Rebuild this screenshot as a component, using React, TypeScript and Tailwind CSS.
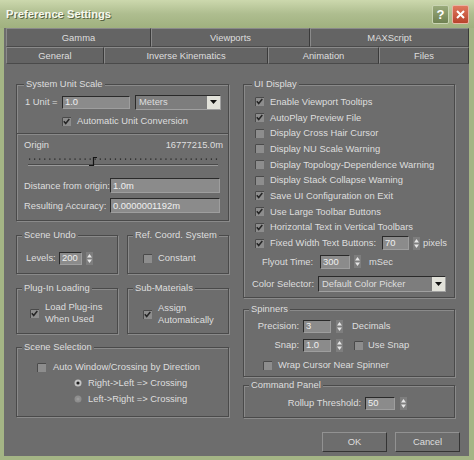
import React from "react";

const BG = "bg-[#6d6d6d]";

function Check({ on }: { on?: boolean }) {
  return (
    <svg width="9" height="9" viewBox="0 0 9 9" className="block shrink-0">
      <rect x="0" y="0" width="9" height="9" fill="#8d8d8d" />
      <path d="M0.5 9V0.5H9" stroke="#4a4a4a" fill="none" />
      {on && <path d="M1.8 4.2 L3.7 6.4 L7.3 2.1" stroke="#262626" strokeWidth="1.6" fill="none" />}
    </svg>
  );
}

function Radio({ on }: { on?: boolean }) {
  return (
    <svg width="8" height="8" viewBox="0 0 8 8" className="block shrink-0">
      <circle cx="4" cy="4" r="3.5" fill={on ? "#c4c4c4" : "#8e8e8e"} />
      <circle cx="4" cy="4" r="1.6" fill={on ? "#1e1e1e" : "#9c9c9c"} />
    </svg>
  );
}

function Spin({ cls = "" }: { cls?: string }) {
  return (
    <svg width="7" height="13" viewBox="0 0 7 13" className={`block shrink-0 ${cls}`}>
      <rect width="7" height="13" fill="#7e7e7e" />
      <polygon points="1,5.5 3.5,2 6,5.5" fill="#e6e6e6" />
      <polygon points="1,7.5 3.5,11 6,7.5" fill="#e6e6e6" />
    </svg>
  );
}

function Field({ cls, v }: { cls: string; v: string }) {
  return (
    <div
      className={`shrink-0 flex items-center overflow-hidden whitespace-nowrap bg-[#8b8b8b] border border-t-[#2a2a2a] border-l-[#2a2a2a] border-r-[#9e9e9e] border-b-[#9e9e9e] pl-[2px] text-[#f0f0f0] ${cls}`}
    >
      {v}
    </div>
  );
}

function Drop({ cls, v }: { cls: string; v: string }) {
  return (
    <div
      className={`shrink-0 flex items-stretch bg-[#7d7d7d] border border-t-[#2a2a2a] border-l-[#2a2a2a] border-r-[#a0a0a0] border-b-[#a0a0a0] ${cls}`}
    >
      <span className="flex-1 flex items-center pl-[3px] whitespace-nowrap">{v}</span>
      <span className="w-[13px] bg-[#e2e2da] flex items-center justify-center">
        <svg width="7" height="4" viewBox="0 0 7 4" className="block">
          <polygon points="0,0 7,0 3.5,4" fill="#111" />
        </svg>
      </span>
    </div>
  );
}

function Group({
  title,
  cls,
  tl = "ml-[5px]",
  children,
}: {
  title: string;
  cls: string;
  tl?: string;
  children?: React.ReactNode;
}) {
  return (
    <div className={`border border-[#4a4a4a] shadow-[inset_1px_1px_0_#8a8a8a,1px_1px_0_#8a8a8a] ${cls}`}>
      <div className={`-mt-[7px] w-fit px-[2px] h-[12px] leading-[12px] whitespace-nowrap ${BG} ${tl}`}>{title}</div>
      {children}
    </div>
  );
}

function Tab({ cls, label }: { cls: string; label: string }) {
  return (
    <div
      className={`flex items-center justify-center bg-[#646464] border-t border-l border-r border-b border-t-[#8a8a8a] border-l-[#8a8a8a] border-r-[#3a3a3a] border-b-[#4a4a4a] ${cls}`}
    >
      {label}
    </div>
  );
}

function Btn({ label }: { label: string }) {
  return (
    <div className="w-[65px] h-[20px] flex items-center justify-center border border-t-[#929292] border-l-[#929292] border-r-[#343434] border-b-[#343434] bg-[#6d6d6d]">
      {label}
    </div>
  );
}

function Slider() {
  const dots = [];
  for (let i = 0; i < 38; i++) {
    dots.push(<rect key={i} x={1 + i * 5.05} y={6.5} width="1.2" height="1.2" fill="#1c1c1c" />);
  }
  return (
    <svg width="190" height="14" viewBox="0 0 190 14" className="block mt-[1px] ml-[11px]">
      {dots}
      <line x1="0" y1="12.5" x2="190" y2="12.5" stroke="#4a4a4a" />
      <line x1="0" y1="13.5" x2="190" y2="13.5" stroke="#9a9a9a" />
      <path d="M61 13.5 H65.5 V5.5 H69" stroke="#141414" strokeWidth="1.2" fill="none" />
    </svg>
  );
}

const uiRows: [string, boolean][] = [
  ["Enable Viewport Tooltips", true],
  ["AutoPlay Preview File", true],
  ["Display Cross Hair Cursor", false],
  ["Display NU Scale Warning", false],
  ["Display Topology-Dependence Warning", false],
  ["Display Stack Collapse Warning", false],
  ["Save UI Configuration on Exit", true],
  ["Use Large Toolbar Buttons", true],
  ["Horizontal Text in Vertical Toolbars", true],
];

export default function App() {
  return (
    <div className="w-[474px] h-[460px] flex flex-col bg-[#a4b585] font-['Liberation_Sans',Arial,sans-serif] text-[9.4px] leading-[12px] text-[#dedede] overflow-hidden">
      {/* Title bar */}
      <div className="h-[28px] shrink-0 flex items-start bg-linear-to-b from-[#ccd8ad] via-[#aebd8f] to-[#a0b17f]">
        <div className="pl-[6px] pt-[7px] text-[11.2px] leading-[14px] font-bold text-[#f6f8ee] [text-shadow:1px_1px_0_#5a6644]">
          Preference Settings
        </div>
        <div className="ml-auto mt-[5px] mr-[5px] flex gap-[3px]">
          <div className="w-[17px] h-[19px] rounded-[2px] border border-[#c9d4b2] bg-linear-to-b from-[#9aab7b] to-[#6f8152] flex items-center justify-center text-white font-bold text-[13px] leading-[13px]">
            ?
          </div>
          <div className="w-[17px] h-[19px] rounded-[2px] border border-[#e8b4a4] bg-linear-to-b from-[#e0785e] to-[#b8422c] flex items-center justify-center">
            <svg width="9" height="9" viewBox="0 0 9 9" className="block">
              <path d="M1 1 L8 8 M8 1 L1 8" stroke="#fff" strokeWidth="2" />
            </svg>
          </div>
        </div>
      </div>

      {/* Body */}
      <div className="flex-1 pl-[4px] pr-[5px] pb-[4px]">
        <div className={`h-full ${BG}`}>
          {/* Tabs */}
          <div className="ml-[2px] flex h-[19px]">
            <Tab cls="w-[145px]" label="Gamma" />
            <Tab cls="w-[159px]" label="Viewports" />
            <Tab cls="w-[159px]" label="MAXScript" />
          </div>
          <div className="ml-[2px] flex h-[17px]">
            <Tab cls="w-[98px]" label="General" />
            <Tab cls="w-[164px]" label="Inverse Kinematics" />
            <Tab cls="w-[111px]" label="Animation" />
            <Tab cls="w-[90px]" label="Files" />
          </div>

          {/* Content */}
          <div className="pl-[12px] pt-[20px] flex gap-[14px]">
            {/* Left column */}
            <div className="w-[213px] flex flex-col">
              <Group cls="h-[137px]" title="System Unit Scale" tl="ml-[7px]">
                <div className="mt-[4px] h-[16px] flex items-center">
                  <span className="ml-[8px] w-[37px] whitespace-nowrap">1 Unit =</span>
                  <Field cls="w-[68px] h-[13px]" v="1.0" />
                  <Drop cls="ml-[5px] w-[86px] h-[15px]" v="Meters" />
                </div>
                <div className="mt-[5px] h-[12px] flex items-center pl-[45px] gap-[6px]">
                  <Check on />
                  <span>Automatic Unit Conversion</span>
                </div>
                <div className="mt-[6px] h-[2px] border-t border-t-[#4a4a4a] border-b border-b-[#8a8a8a]" />
                <div className="mt-[4px] h-[12px] flex justify-between pl-[7px] pr-[5px]">
                  <span>Origin</span>
                  <span>16777215.0m</span>
                </div>
                <Slider />
                <div className="mt-[12px] h-[15px] flex items-center pl-[7px]">
                  <span className="w-[86px] whitespace-nowrap">Distance from origin:</span>
                  <Field cls="w-[110px] h-[15px]" v="1.0m" />
                </div>
                <div className="mt-[5px] h-[15px] flex items-center pl-[7px]">
                  <span className="w-[86px] whitespace-nowrap">Resulting Accuracy:</span>
                  <Field cls="w-[110px] h-[15px]" v="0.0000001192m" />
                </div>
              </Group>

              <div className="mt-[14px] flex gap-[9px]">
                <Group cls="w-[102px] h-[39px]" title="Scene Undo">
                  <div className="mt-[10px] h-[14px] flex items-center pl-[9px]">
                    <span className="w-[33px]">Levels:</span>
                    <Field cls="w-[23px] h-[13px]" v="200" />
                    <Spin cls="ml-[4px]" />
                  </div>
                </Group>
                <Group cls="w-[102px] h-[39px]" title="Ref. Coord. System">
                  <div className="mt-[10px] h-[14px] flex items-center pl-[15px] gap-[6px]">
                    <Check />
                    <span>Constant</span>
                  </div>
                </Group>
              </div>

              <div className="mt-[14px] flex gap-[9px]">
                <Group cls="w-[102px] h-[46px]" title="Plug-In Loading">
                  <div className="mt-[7px] h-[24px] flex items-center pl-[13px] gap-[6px]">
                    <Check on />
                    <span>
                      Load Plug-ins
                      <br />
                      When Used
                    </span>
                  </div>
                </Group>
                <Group cls="w-[102px] h-[46px]" title="Sub-Materials">
                  <div className="mt-[8px] h-[24px] flex items-center pl-[15px] gap-[6px]">
                    <Check on />
                    <span>
                      Assign
                      <br />
                      Automatically
                    </span>
                  </div>
                </Group>
              </div>

              <Group cls="mt-[13px] h-[70px]" title="Scene Selection">
                <div className="mt-[8px] h-[12px] flex items-center pl-[20px] gap-[7px]">
                  <Check />
                  <span>Auto Window/Crossing by Direction</span>
                </div>
                <div className="mt-[4px] h-[12px] flex items-center pl-[57px] gap-[6px]">
                  <Radio on />
                  <span>{"Right->Left => Crossing"}</span>
                </div>
                <div className="mt-[4px] h-[12px] flex items-center pl-[57px] gap-[6px]">
                  <Radio />
                  <span>{"Left->Right => Crossing"}</span>
                </div>
              </Group>
            </div>

            {/* Right column */}
            <div className="w-[212px] flex flex-col">
              <Group cls="h-[214px]" title="UI Display" tl="ml-[8px]">
                <div className="mt-[4px] flex flex-col">
                  {uiRows.map(([t, on]) => (
                    <div key={t} className="h-[15.7px] flex items-center pl-[11px] gap-[6px] whitespace-nowrap">
                      <Check on={on} />
                      <span>{t}</span>
                    </div>
                  ))}
                  <div className="h-[15.7px] flex items-center pl-[11px] whitespace-nowrap">
                    <Check on />
                    <span className="ml-[6px] w-[112px]">Fixed Width Text Buttons:</span>
                    <Field cls="w-[27px] h-[14px]" v="70" />
                    <Spin cls="ml-[4px]" />
                    <span className="ml-[3px]">pixels</span>
                  </div>
                </div>
                <div className="mt-[4px] h-[14px] flex items-center pl-[18px]">
                  <span className="w-[58px] whitespace-nowrap">Flyout Time:</span>
                  <Field cls="w-[30px] h-[14px]" v="300" />
                  <Spin cls="ml-[4px]" />
                  <span className="ml-[8px]">mSec</span>
                </div>
                <div className="mt-[7px] h-[16px] flex items-center pl-[8px]">
                  <span className="w-[66px] whitespace-nowrap">Color Selector:</span>
                  <Drop cls="w-[128px] h-[16px]" v="Default Color Picker" />
                </div>
              </Group>

              <Group cls="mt-[11px] h-[68px]" title="Spinners">
                <div className="mt-[4px] h-[14px] flex items-center">
                  <span className="w-[55px] text-right">Precision:</span>
                  <Field cls="ml-[4px] w-[28px] h-[13px]" v="3" />
                  <Spin cls="ml-[5px]" />
                  <span className="ml-[9px]">Decimals</span>
                </div>
                <div className="mt-[5px] h-[14px] flex items-center">
                  <span className="w-[55px] text-right">Snap:</span>
                  <Field cls="ml-[4px] w-[28px] h-[13px]" v="1.0" />
                  <Spin cls="ml-[5px]" />
                  <span className="ml-[11px]">
                    <Check />
                  </span>
                  <span className="ml-[5px]">Use Snap</span>
                </div>
                <div className="mt-[7px] h-[12px] flex items-center pl-[19px] gap-[6px]">
                  <Check />
                  <span>Wrap Cursor Near Spinner</span>
                </div>
              </Group>

              <Group cls="mt-[8px] h-[33px]" title="Command Panel">
                <div className="mt-[5px] h-[14px] flex items-center">
                  <span className="w-[117px] text-right whitespace-nowrap">Rollup Threshold:</span>
                  <Field cls="ml-[4px] w-[30px] h-[13px]" v="50" />
                  <Spin cls="ml-[5px]" />
                </div>
              </Group>

              <div className="mt-[14px] -mr-[5px] flex justify-end gap-[8px]">
                <Btn label="OK" />
                <Btn label="Cancel" />
              </div>
            </div>
          </div>
        </div>
      </div>
    </div>
  );
}
